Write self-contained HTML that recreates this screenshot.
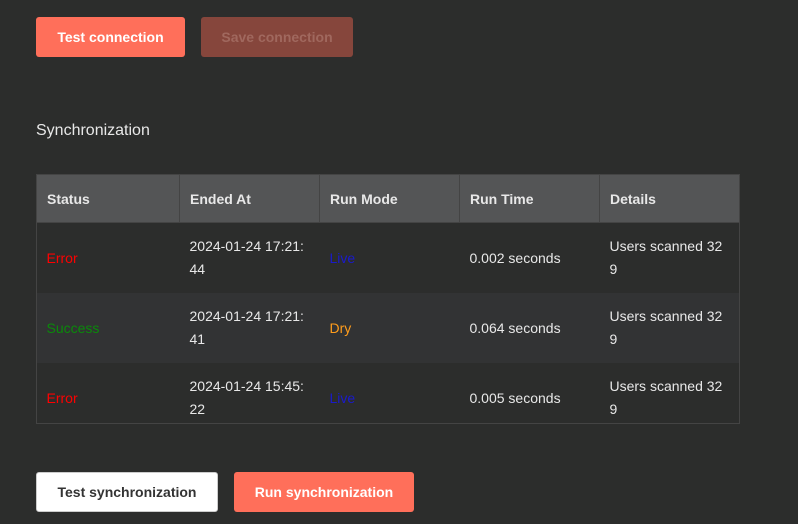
<!DOCTYPE html>
<html><head><style>
body{margin:0;width:798px;height:524px;background:#2c2d2c;font-family:"Liberation Sans",sans-serif;font-size:14px;color:#e8e8e8;position:relative;overflow:hidden}
.btn{position:absolute;height:40px;border-radius:3px;box-sizing:border-box;display:flex;align-items:center;justify-content:center;font-weight:bold;font-size:14px}
.h{position:absolute;left:36px;top:122px;font-size:16px;color:#e8e8e8}
.wrap{position:absolute;left:36px;top:174px;width:704px;height:250px;overflow:hidden;border:1px solid #444;box-sizing:border-box}
table{border-collapse:collapse;width:704px;table-layout:fixed;margin:-1px}
th{background:#545556;height:47px;text-align:left;padding:0 10px;border:1px solid #444;font-size:14px;color:#e8e8e8}
td{height:70px;padding:0 10px;line-height:23px;vertical-align:middle}
tr.alt td{background:#323334}
</style></head><body>
<div class="btn" style="left:36px;top:17px;width:149px;background:#ff6f5a;color:#fff">Test connection</div>
<div class="btn" style="left:201px;top:17px;width:152px;background:#86463c;color:#a0685e">Save connection</div>
<div class="h">Synchronization</div>
<div class="wrap">
<table>
<colgroup><col style="width:143px"><col style="width:140px"><col style="width:140px"><col style="width:140px"><col style="width:141px"></colgroup>
<tr><th>Status</th><th>Ended At</th><th>Run Mode</th><th>Run Time</th><th>Details</th></tr>
<tr><td style="color:#f00">Error</td><td>2024-01-24 17:21:<br>44</td><td style="color:#1a1acc">Live</td><td>0.002 seconds</td><td>Users scanned 32<br>9</td></tr>
<tr class="alt"><td style="color:#0a8a0a">Success</td><td>2024-01-24 17:21:<br>41</td><td style="color:#ff9d1c">Dry</td><td>0.064 seconds</td><td>Users scanned 32<br>9</td></tr>
<tr><td style="color:#f00">Error</td><td>2024-01-24 15:45:<br>22</td><td style="color:#1a1acc">Live</td><td>0.005 seconds</td><td>Users scanned 32<br>9</td></tr>
</table>
</div>
<div class="btn" style="left:36px;top:472px;width:182px;background:#fff;color:#333;border:1px solid #ccc">Test synchronization</div>
<div class="btn" style="left:234px;top:472px;width:180px;background:#ff6f5a;color:#fff">Run synchronization</div>
</body></html>
